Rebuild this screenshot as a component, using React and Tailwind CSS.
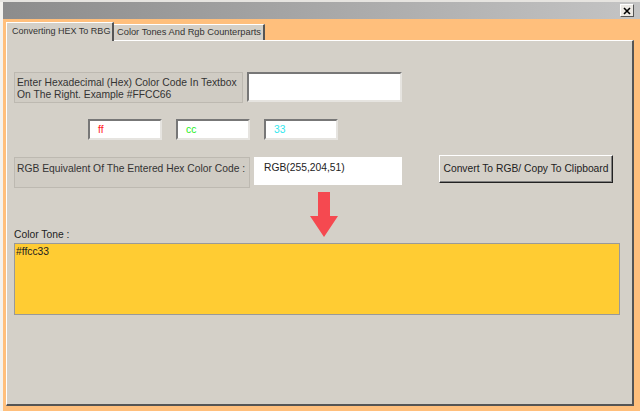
export default function App() {
  const font = { fontFamily: '"Liberation Sans", Arial, sans-serif' };
  return (
    <div className="w-[640px] h-[411px] bg-[#f4f2ee] flex flex-col overflow-hidden text-[10.3px] text-[#222] whitespace-nowrap" style={font}>
      <div className="h-[2px] bg-[#e6e4e0]" />
      <div className="ml-[3px] h-[17px] bg-gradient-to-r from-[#8c8c8c] to-[#c4c4c4] flex items-center justify-end pr-[6px]">
        <div className="w-[14px] h-[13px] bg-[#ece9e4] border border-t-white border-l-white border-r-[#555] border-b-[#555] flex items-center justify-center">
          <svg width="8" height="8" viewBox="0 0 8 8"><path d="M1 1L7 7M7 1L1 7" stroke="#000" strokeWidth="1.6" /></svg>
        </div>
      </div>
      <div className="ml-[3px] flex-1 bg-[#ffbf7c] flex flex-col pl-[3px] pr-[6px] pt-[2px] pb-[5px]">
        <div className="flex items-end h-[19px]">
          <div className="w-[108px] h-[19px] pl-[5px] bg-[#d4d0c8] border-l border-t border-white border-r-2 border-r-[#555] flex items-center text-[9px] text-[#333] relative z-10 -mb-px">
            Converting HEX To RBG
          </div>
          <div className="w-[151px] h-[16px] pl-[3px] bg-[#d4d0c8] border-t border-white border-r-2 border-r-[#555] flex items-center text-[9.3px] text-[#333]">
            Color Tones And Rgb Counterparts
          </div>
        </div>
        <div className="flex-1 bg-[#d4d0c8] border-t border-l border-white border-r-2 border-b-2 border-r-[#555] border-b-[#555] flex flex-col pl-[7px] pr-[12px]">
          <div className="flex items-start mt-[31px] h-[31px]">
            <div className="w-[229px] h-[31px] border border-[#bdb9b1] bg-[#d0ccc4] pl-[2px] pt-[4px] leading-[12px] text-[#333]">
              <div>Enter Hexadecimal (Hex) Color Code In Textbox</div>
              <div>On The Right. Example #FFCC66</div>
            </div>
            <div className="ml-[4px] w-[155px] h-[30px] bg-white border-2 border-t-[#777] border-l-[#777] border-r-[#e6e4e0] border-b-[#e6e4e0]" />
          </div>
          <div className="flex mt-[16px] h-[21px] pl-[74px] gap-[14px]">
            <div className="w-[74px] h-[21px] bg-white border-2 border-t-[#777] border-l-[#777] border-r-[#e6e4e0] border-b-[#e6e4e0] pl-[8px] text-[#ff2020] leading-[17px]">ff</div>
            <div className="w-[74px] h-[21px] bg-white border-2 border-t-[#777] border-l-[#777] border-r-[#e6e4e0] border-b-[#e6e4e0] pl-[8px] text-[#22ee22] leading-[17px]">cc</div>
            <div className="w-[74px] h-[21px] bg-white border-2 border-t-[#777] border-l-[#777] border-r-[#e6e4e0] border-b-[#e6e4e0] pl-[8px] text-[#33e8ee] leading-[17px]">33</div>
          </div>
          <div className="flex items-start mt-[17px] h-[32px]">
            <div className="w-[236px] h-[31px] border border-[#bdb9b1] bg-[#d0ccc4] pl-[2px] pt-[3px] text-[#333]">
              RGB Equivalent Of The Entered Hex Color Code :
            </div>
            <div className="ml-[4px] w-[148px] h-[28px] bg-white pl-[10px] pt-[3px] text-[#222]">RGB(255,204,51)</div>
            <div className="ml-[37px] -mt-[2px] w-[174px] h-[28px] bg-[#d4d0c8] border border-t-white border-l-white border-r-[#222] border-b-[#222] shadow-[inset_-1px_-1px_0_#808080] flex items-center justify-center text-[#222]">
              Convert To RGB/ Copy To Clipboard
            </div>
          </div>
          <div className="relative h-[52px]">
            <svg className="absolute left-[295px] top-[3px]" width="30" height="46" viewBox="0 0 30 46">
              <path d="M9 0H21V24H29L15 45L1 24H9Z" fill="#f54950" />
            </svg>
            <div className="absolute left-0 bottom-[-1px] text-[#222]">Color Tone :</div>
          </div>
          <div className="mt-[2px] w-[606px] h-[72px] bg-[#ffcc33] border border-[#999] pl-[1px] pt-[2px] text-[#222] leading-[12px]">#ffcc33</div>
        </div>
      </div>
    </div>
  );
}
